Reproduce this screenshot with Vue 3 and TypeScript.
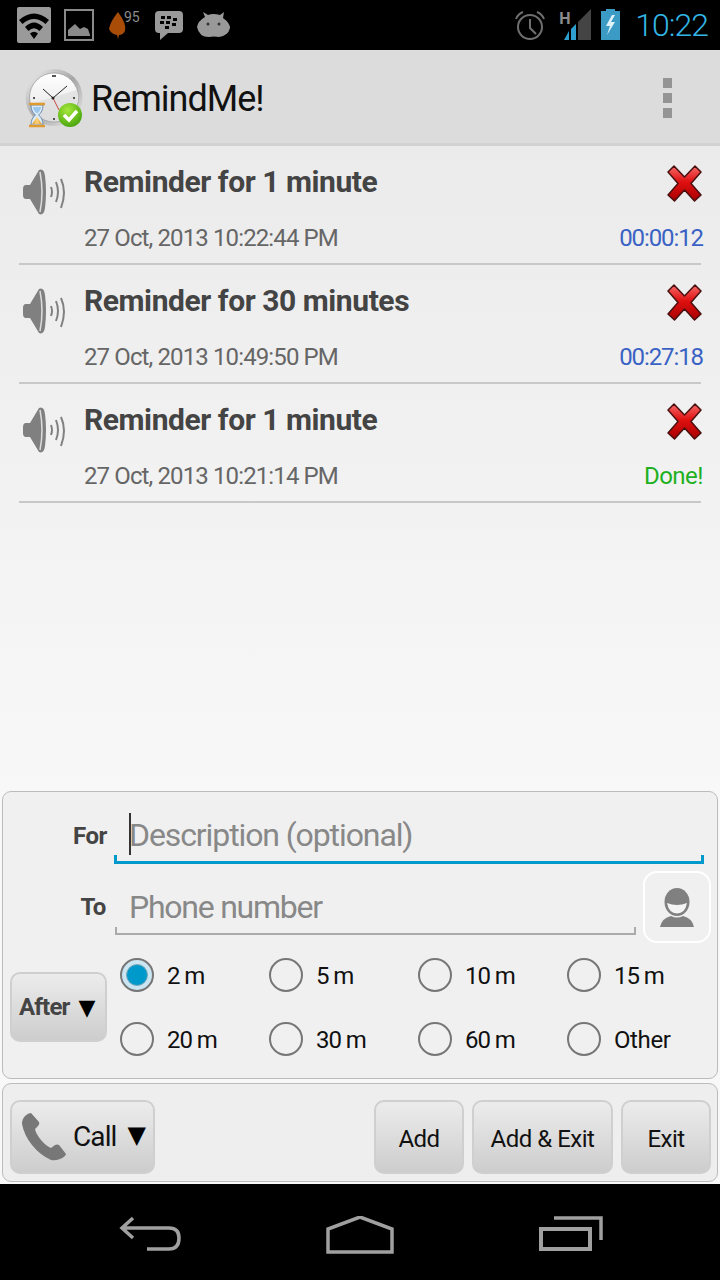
<template>
  <div class="phone">
    <!-- status bar -->
    <div class="status">
      <svg class="st-wifi" width="34" height="36" viewBox="0 0 34 36">
        <rect width="34" height="36" rx="2" fill="#9a9a9a" />
        <path d="M2 13 Q17 0 32 13 L28.500 17 Q17 7 5.500 17Z" fill="#000" />
        <path d="M8 20 Q17 11 26 20 L22.500 24 Q17 18.500 11.500 24Z" fill="#000" />
        <path d="M13 26.500 Q17 23 21 26.500 L17 32Z" fill="#000" />
      </svg>
      <svg class="st-pic" width="30" height="32" viewBox="0 0 30 32">
        <rect x="1" y="1" width="28" height="30" fill="none" stroke="#8a8a8a" stroke-width="2" />
        <path d="M4 27 V21 L11 15 L16 20 L20 18 L24 20 L26 26 V27Z" fill="#8a8a8a" />
      </svg>
      <div class="st-leaf">
        <svg width="18" height="27" viewBox="0 0 18 27">
          <path d="M9 0 Q18 12 16 19 Q14 23 10 23 L9 27 L8 23 Q2 22 0 17 Q1 10 9 0Z" fill="#a84c08" />
        </svg>
        <span class="leaf-num">95</span>
      </div>
      <svg class="st-bbm" width="28" height="29" viewBox="0 0 28 29">
        <path d="M4 0 H24 Q28 0 28 4 V18 Q28 22 24 22 H13 L5 29 V22 H4 Q0 22 0 18 V4 Q0 0 4 0Z" fill="#999" />
        <g fill="#000">
          <rect x="6" y="5" width="4" height="3" /><rect x="12" y="5" width="4" height="3" />
          <rect x="5" y="10" width="4" height="3" /><rect x="11" y="10" width="4" height="3" />
          <rect x="18" y="7" width="4" height="3" /><rect x="17" y="12" width="4" height="3" />
          <rect x="10" y="15" width="4" height="3" />
        </g>
      </svg>
      <svg class="st-droid" width="33" height="26" viewBox="0 0 33 26">
        <path d="M8 5 L6 0 L11 3 Q16 1 23 3 L27 0 L26 6 Q33 11 33 16 Q31 24 22 25 Q17 24 12 25 Q2 25 0 15 Q1 9 8 5Z" fill="#999" />
        <circle cx="11" cy="12" r="1.500" fill="#333" /><circle cx="22" cy="12" r="1.500" fill="#333" />
      </svg>
      <div class="st-spacer"></div>
      <svg class="st-alarm" width="30" height="30" viewBox="0 0 30 30">
        <circle cx="15" cy="16" r="12" fill="none" stroke="#6f6f6f" stroke-width="2" />
        <path d="M15 8 V17 L21 23" fill="none" stroke="#6f6f6f" stroke-width="2" />
        <path d="M1 8 Q3 3 8 1 M29 8 Q27 3 22 1" fill="none" stroke="#6f6f6f" stroke-width="2" />
      </svg>
      <div class="st-signal">
        <span class="h-mark">H</span>
        <svg width="27" height="31" viewBox="0 0 27 31">
          <path d="M27 0 V31 H14 V13Z" fill="#444" />
          <path d="M12 15 V31 H7 V20Z" fill="#2f9fcf" />
          <path d="M5 22 V31 H0Z" fill="#2f9fcf" />
        </svg>
      </div>
      <svg class="st-batt" width="19" height="31" viewBox="0 0 19 31">
        <path d="M5 0 H14 V2 H19 V31 H0 V2 H5Z" fill="#3b9bc4" />
        <path d="M11 6 L5 17 H9 L6 26 L14 13 H10 L14 6Z" fill="#dff2fa" />
      </svg>
      <span class="clock">10:22</span>
    </div>

    <!-- action bar -->
    <div class="actionbar">
      <svg class="logo" width="58" height="60" viewBox="0 0 58 60">
        <defs>
          <linearGradient id="rim" x1="0" y1="0" x2="1" y2="1">
            <stop offset="0" stop-color="#f4f4f4" /><stop offset="0.5" stop-color="#a6a6a6" /><stop offset="1" stop-color="#ededed" />
          </linearGradient>
          <linearGradient id="face" x1="0" y1="0" x2="0" y2="1">
            <stop offset="0" stop-color="#fff" /><stop offset="1" stop-color="#e2e2e2" />
          </linearGradient>
          <linearGradient id="sand" x1="0" y1="0" x2="1" y2="0">
            <stop offset="0" stop-color="#e09a2e" /><stop offset="0.5" stop-color="#fbd27a" /><stop offset="1" stop-color="#e09a2e" />
          </linearGradient>
          <radialGradient id="tick" cx="0.4" cy="0.3" r="0.8">
            <stop offset="0" stop-color="#a6e83c" /><stop offset="1" stop-color="#3f9e08" />
          </radialGradient>
        </defs>
        <circle cx="29" cy="29.500" r="28.500" fill="url(#rim)" />
        <circle cx="29" cy="29.500" r="24.500" fill="url(#face)" stroke="#8c8c8c" stroke-width="0.600" />
        <path d="M6 36 L52 22 Q55 48 29 53 Q10 52 6 36Z" fill="#d8d8d8" opacity="0.6" />
        <path d="M27 8 H31 M28 51 H30 M8 30 H10 M48 30 H50" stroke="#555" stroke-width="2" />
        <path d="M28 30 L18 21 M28 30 L42 18" stroke="#222" stroke-width="1" fill="none" />
        <path d="M28 30 L34 42" stroke="#c44" stroke-width="1" fill="none" />
        <circle cx="28" cy="30" r="1.500" fill="#222" />
        <path d="M6 37 H18 Q18 44 13.500 47 Q18 50 18 57 H6 Q6 50 10.500 47 Q6 44 6 37Z" fill="#dcebf8" stroke="#6d8fb0" stroke-width="1" />
        <path d="M8 39 H16 Q15.500 43 12 45.500 Q8.500 43 8 39Z" fill="#9cc6ea" />
        <path d="M7 56 L12 49 L17 56Z" fill="url(#sand)" />
        <path d="M4 36 H20 M4 58 H20" stroke="#e09a2e" stroke-width="2.500" />
        <circle cx="45" cy="47" r="12" fill="url(#tick)" />
        <path d="M39 47 L44 52 L52 43" fill="none" stroke="#fff" stroke-width="3.500" />
      </svg>
      <span class="app-title">RemindMe!</span>
      <div class="overflow"><i></i><i></i><i></i></div>
    </div>

    <div class="content">
      <!-- reminders -->
      <div class="list">
        <div v-for="(r, i) in reminders" :key="i" class="row">
          <svg class="speaker" width="44" height="48" viewBox="0 0 44 48">
            <path d="M16 2 Q21 0 22 8 Q24 24 22 40 Q21 48 16 46 L7 31 H3 Q0 31 0 27 V21 Q0 17 3 17 H7Z" fill="#808080" />
            <path d="M17 4 Q21 24 17 44" fill="none" stroke="#ddd" stroke-width="1.500" />
            <path d="M28 19 Q30 24 28 29 M33 14 Q37 24 33 34 M38 11 Q44 24 38 40" fill="none" stroke="#808080" stroke-width="2" />
          </svg>
          <div class="row-body">
            <div class="row-top">
              <span class="row-title">{{ r.title }}</span>
              <svg class="del" width="35" height="37" viewBox="0 0 35 37">
                <defs>
                  <linearGradient id="redx" x1="0" y1="0" x2="0" y2="1">
                    <stop offset="0" stop-color="#f56a6a" /><stop offset="0.45" stop-color="#e01010" /><stop offset="1" stop-color="#a80000" />
                  </linearGradient>
                </defs>
                <path d="M7 1 L17.500 12 L28 1 L34 7 L24 18.500 L34 30 L27.500 36 L17.500 25 L7.500 36 L1 30 L11 18.500 L1 7Z" fill="url(#redx)" stroke="#4a1010" stroke-width="1.500" stroke-linejoin="round" />
              </svg>
            </div>
            <div class="row-bottom">
              <span class="row-date">{{ r.date }}</span>
              <span class="row-left" :class="{ done: r.left === 'Done!' }">{{ r.left }}</span>
            </div>
          </div>
        </div>
      </div>

      <!-- add form -->
      <div class="panel form">
        <div class="line line-for">
          <span class="lbl">For</span>
          <div class="field active">
            <i class="caret"></i>
            <span class="ph ph-desc">Description (optional)</span>
          </div>
        </div>
        <div class="line line-to">
          <span class="lbl">To</span>
          <div class="field">
            <span class="ph ph-phone">Phone number</span>
          </div>
          <div class="contact">
            <svg width="36" height="40" viewBox="0 0 36 40">
              <ellipse cx="18" cy="14" rx="12.500" ry="14" fill="#808080" />
              <path d="M8 15 Q18 19 28 15 Q26 25.500 18 25.500 Q10 25.500 8 15Z" fill="#f4f4f4" />
              <path d="M1 39 Q3 30 12 28 Q18 31 24 28 Q33 30 35 39Z" fill="#808080" />
            </svg>
          </div>
        </div>
        <div class="line line-after">
          <button class="btn after"><span>After</span><span class="tri">▼</span></button>
          <div class="radios">
            <label v-for="t in times" :key="t" class="radio" :class="{ wide: t === 'Other' }">
              <span class="dot" :class="{ on: t === selected }"></span>
              <span class="radio-txt">{{ t }}</span>
            </label>
          </div>
        </div>
      </div>

      <!-- actions -->
      <div class="panel actions">
        <button class="btn call">
          <svg width="44" height="48" viewBox="0 0 44 48">
            <path d="M9 0 L17 9 Q18 11 16 13 L13 16 Q14 21 19 27 Q24 33 29 35 L33 32 Q35 31 37 32 L44 41 Q43 44 38 46 Q33 48 29 47 Q18 42 10 32 Q2 22 0 11 Q0 6 3 3 Q6 0 9 0Z" fill="#777" />
          </svg>
          <span class="call-txt">Call</span>
          <span class="tri">▼</span>
        </button>
        <div class="grow"></div>
        <button class="btn add">Add</button>
        <button class="btn addexit">Add &amp; Exit</button>
        <button class="btn exit">Exit</button>
      </div>
    </div>

    <!-- nav bar -->
    <div class="navbar">
      <svg width="62" height="35" viewBox="0 0 62 35">
        <path d="M14 2 L3 12 L14 22 M3 12 H50 Q60 12 60 22 Q60 33 50 33 H28" fill="none" stroke="#a0a0a0" stroke-width="3.500" />
      </svg>
      <svg width="68" height="38" viewBox="0 0 68 38">
        <path d="M2 36 V13 L34 1 L66 13 V36Z" fill="none" stroke="#a0a0a0" stroke-width="3.500" />
      </svg>
      <svg width="64" height="35" viewBox="0 0 64 35">
        <rect x="2" y="13" width="49" height="20" fill="none" stroke="#a0a0a0" stroke-width="4" />
        <path d="M15 2 H62 V24" fill="none" stroke="#a0a0a0" stroke-width="3.500" />
      </svg>
    </div>
  </div>
</template>

<script setup lang="ts">
interface Reminder {
  title: string
  date: string
  left: string
}

const reminders: Reminder[] = [
  { title: 'Reminder for 1 minute', date: '27 Oct, 2013 10:22:44 PM', left: '00:00:12' },
  { title: 'Reminder for 30 minutes', date: '27 Oct, 2013 10:49:50 PM', left: '00:27:18' },
  { title: 'Reminder for 1 minute', date: '27 Oct, 2013 10:21:14 PM', left: 'Done!' },
]

const times = ['2 m', '5 m', '10 m', '15 m', '20 m', '30 m', '60 m', 'Other']
const selected = '2 m'
</script>

<style>
html, body { margin: 0; background: #000; }
</style>

<style scoped>
.phone {
  width: 720px;
  height: 1280px;
  display: flex;
  flex-direction: column;
  background: #000;
  font-family: Roboto, sans-serif;
  overflow: hidden;
}

.status {
  height: 50px;
  flex: none;
  display: flex;
  align-items: flex-start;
  background: #000;
}
.st-wifi { margin: 7px 0 0 17px; }
.st-pic { margin: 9px 0 0 13px; }
.st-leaf { margin: 12px 0 0 15px; width: 46px; position: relative; }
.leaf-num { position: absolute; left: 15px; top: -3px; font-size: 14px; color: #8c8c8c; }
.st-bbm { margin: 11px 0 0 0; }
.st-droid { margin: 12px 0 0 14px; }
.st-spacer { flex: 1; }
.st-alarm { margin: 11px 0 0 0; }
.st-signal { margin: 9px 0 0 14px; width: 32px; position: relative; display: flex; justify-content: flex-end; }
.h-mark { position: absolute; left: 0; top: 0; font-size: 16px; font-weight: 700; color: #8c8c8c; }
.st-batt { margin: 9px 0 0 10px; }
.clock { margin: 5px 12px 0 15px; font-size: 32px; font-weight: 300; line-height: 40px; letter-spacing: -1px; color: #33b5e5; }

.actionbar {
  height: 93px;
  flex: none;
  display: flex;
  align-items: center;
  background: #dcdcdc;
  border-bottom: 3px solid #d2d2d2;
}
.logo { margin: 2px 0 0 25px; }
.app-title { margin: 5px 0 0 8px; font-size: 36px; letter-spacing: -1px; color: #111; }
.overflow { margin: 3px 48px 0 auto; display: flex; flex-direction: column; gap: 5px; }
.overflow i { width: 9px; height: 10px; background: #949494; display: block; }

.content {
  height: 1038px;
  flex: none;
  background: linear-gradient(#ebebeb, #f8f8f8 645px);
}
.list {
  height: 645px;
  box-sizing: border-box;
  padding: 0 17px 0 19px;
}
.row {
  height: 119px;
  box-sizing: border-box;
  display: flex;
  border-bottom: 2px solid #c8c8c8;
  margin-right: 2px;
}
.speaker { margin: 22px 0 0 4px; flex: none; }
.row-body { flex: 1; margin-left: 17px; margin-right: -2px; }
.row-top { height: 72px; display: flex; justify-content: space-between; align-items: flex-start; }
.row-title { font-size: 30px; font-weight: 700; color: #444; line-height: 36px; margin-top: 18px; letter-spacing: -0.43px; }
.del { margin: 19px 1px 0 0; }
.row-bottom { display: flex; justify-content: space-between; font-size: 24px; line-height: 28px; margin-top: 6px; letter-spacing: -0.88px; }
.row-date { color: #666; }
.row-left { color: #3a62c4; letter-spacing: -1.1px; }
.row-left.done { color: #1eb01e; letter-spacing: -0.5px; }

.panel {
  margin: 0 2px;
  box-sizing: border-box;
  background: #f0f0f0;
  border: 1px solid #bcbcbc;
  border-radius: 9px;
}
.form { height: 288px; padding: 0 6px 0 7px; }
.line { display: flex; }
.line-for { height: 71px; margin-top: 1px; }
.line-to { height: 71px; }
.lbl {
  width: 97px;
  text-align: right;
  font-size: 24px;
  font-weight: 700;
  letter-spacing: -0.4px;
  color: #444;
  flex: none;
}
.line-for .lbl { line-height: 86px; }
.line-to .lbl { line-height: 86px; margin-left: -1px; margin-right: 1px; }
.field {
  position: relative;
  box-sizing: border-box;
  margin-left: 7px;
  height: 71px;
  border-bottom: 2px solid #aaa;
  padding-left: 15px;
  flex: none;
  width: 521px;
  display: flex;
  align-items: flex-end;
}
.field::before, .field::after {
  content: '';
  position: absolute;
  bottom: 0;
  width: 2px;
  height: 6px;
  background: #aaa;
}
.field::before { left: 0; }
.field::after { right: 0; }
.field.active { width: 590px; border-bottom: 3px solid #0099cc; }
.field.active::before, .field.active::after { background: #0099cc; width: 3px; }
.ph { font-size: 32px; color: #888; line-height: 44px; padding-bottom: 4px; }
.ph-desc { letter-spacing: -1.1px; }
.ph-phone { letter-spacing: -1.25px; margin-left: -1px; }
.caret { position: absolute; left: 15px; bottom: 6px; width: 2px; height: 42px; background: #333; }
.line-to .field { margin-left: 8px; }
.contact {
  box-sizing: border-box;
  width: 68px;
  height: 72px;
  margin-left: 7px;
  margin-top: 7px;
  border: 2px solid #fff;
  border-radius: 14px;
  display: flex;
  align-items: center;
  justify-content: center;
  flex: none;
}
.contact svg { margin-top: 2px; }

.line-after { margin-top: 8px; align-items: center; }
.btn {
  box-sizing: border-box;
  border: 2px solid #cfcfcf;
  border-radius: 10px;
  background: linear-gradient(#ececec, #cdcdcd);
  font-family: Roboto, sans-serif;
  font-size: 24px;
  letter-spacing: -0.5px;
  color: #111;
  padding: 0;
  display: flex;
  align-items: center;
  justify-content: center;
  white-space: pre;
}
.tri { font-family: 'DejaVu Sans', sans-serif; font-size: 22px; letter-spacing: 0; color: #000; }
.after { width: 97px; height: 70px; font-weight: 700; color: #444; flex: none; letter-spacing: -0.8px; gap: 9px; justify-content: flex-start; padding-left: 7px; }
.radios {
  margin-left: 13px;
  display: grid;
  grid-template-columns: repeat(4, 149px);
  grid-auto-rows: 64px;
}
.radio { display: flex; align-items: center; gap: 13px; font-size: 24px; letter-spacing: -1.1px; color: #111; }
.radio.wide { letter-spacing: -0.4px; }
.radio-txt { margin-top: 2px; }
.dot {
  box-sizing: border-box;
  width: 34px;
  height: 34px;
  border-radius: 50%;
  border: 2px solid #767676;
  flex: none;
  position: relative;
}
.dot.on { background: #cbe6f2; }
.dot.on::after {
  content: '';
  position: absolute;
  inset: 4px;
  border-radius: 50%;
  background: #0099cc;
  border: 1px solid #7fa8b8;
}

.actions {
  margin-top: 4px;
  height: 99px;
  display: flex;
  align-items: center;
  padding: 8px 6px 0 7px;
  gap: 8px;
  background: #eeeeee;
}
.call { width: 145px; height: 74px; justify-content: flex-start; padding-left: 10px; font-size: 28px; letter-spacing: -0.9px; }
.call-txt { margin-left: 7px; }
.call .tri { margin-left: 11px; font-size: 24px; margin-top: -3px; }
.grow { flex: 1; }
.add, .addexit, .exit { height: 74px; padding-top: 4px; }
.add { width: 90px; }
.addexit { width: 141px; }
.exit { width: 90px; }

.navbar {
  flex: 1;
  display: flex;
  align-items: flex-start;
  background: #000;
  padding: 32px 0 0 119px;
  gap: 145px;
}
</style>
